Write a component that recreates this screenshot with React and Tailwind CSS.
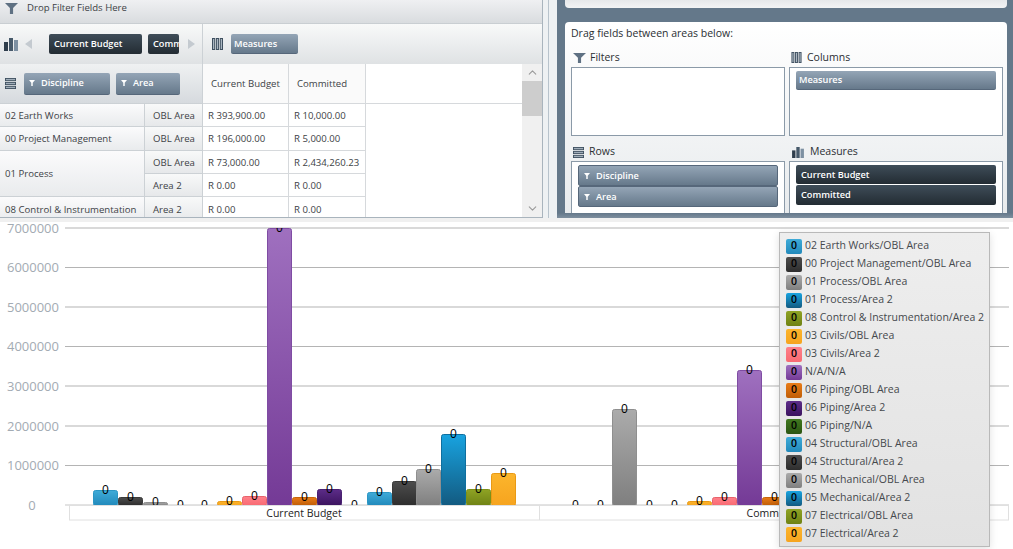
import React from "react";
import { ChevronUp, ChevronDown } from "lucide-react";

const Funnel = ({ className = "", color = "#5f7183" }) => (
  <svg viewBox="0 0 14 14" preserveAspectRatio="none" className={className}><path d="M0 0h14L8.7 6.5V14H5.3V6.5z" fill={color} /></svg>
);
const Bars = ({ className = "" }) => (
  <svg viewBox="0 0 14 13" className={className}>
    <rect x="0" y="4" width="4" height="9" fill="#2f3e4c" /><rect x="5" y="0" width="4" height="13" fill="#46596a" /><rect x="10" y="2" width="4" height="11" fill="#7d90a2" />
  </svg>
);
const Cols = ({ className = "" }) => (
  <svg viewBox="0 0 11 12" className={className} fill="#aab6c1" stroke="#3f5060" strokeWidth="1">
    <rect x=".5" y=".5" width="2.2" height="11" /><rect x="4.4" y=".5" width="2.2" height="11" /><rect x="8.3" y=".5" width="2.2" height="11" />
  </svg>
);
const RowsIcon = ({ className = "" }) => (
  <svg viewBox="0 0 12 12" className={className} fill="#9fadb9" stroke="#3f5060" strokeWidth="1">
    <rect x=".5" y=".5" width="11" height="2.4" /><rect x=".5" y="4.8" width="11" height="2.4" /><rect x=".5" y="9.1" width="11" height="2.4" />
  </svg>
);
const Tri = ({ dir }) => (
  <svg viewBox="0 0 7 10" className="w-[7px] h-[10px]"><path d={dir === "l" ? "M7 0v10L0 5z" : "M0 0v10l7-5z"} fill="#c4cad0" /></svg>
);

const DarkChip = ({ children, className = "" }) => (
  <div className={`flex items-center rounded-[2px] bg-gradient-to-b from-[#3f4d59] to-[#232c33] text-white font-semibold text-[9.2px] overflow-hidden whitespace-nowrap ${className}`}>{children}</div>
);
const SteelChip = ({ children, className = "", filter }) => (
  <div className={`flex items-center rounded-[2px] border-b border-[#56677a] bg-gradient-to-b from-[#94a5b6] to-[#66798b] text-white font-semibold text-[9.2px] whitespace-nowrap ${className}`}>
    {filter && <Funnel className="w-[6px] h-[6px] ml-[5px] mr-[6px]" color="#ffffff" />}{children}
  </div>
);

const leftCell = "flex items-center pl-[5px] pt-[2px] bg-gradient-to-b from-[#fbfbfc] to-[#e9ebed] border-b border-r border-[#ccd1d5]";
const midCell = "flex items-center pl-2 pt-[2px] bg-gradient-to-b from-[#f8f9f9] to-[#e6e8ea] border-b border-r border-[#ccd1d5]";
const valCell = "flex items-center pl-[5px] pt-[2px] bg-white border-b border-r border-[#d6d9dc]";

function Pivot() {
  return (
    <div className="w-[543px] shrink-0 flex flex-col border-r border-b border-[#a9b4bd] text-[#3d4246] text-[9.6px]">
      <div className="h-[24px] shrink-0 flex items-center pb-[6px] bg-gradient-to-b from-[#eff0f2] to-[#d9dcdf] border-b border-[#c9ced2]">
        <Funnel className="w-[13px] h-[11px] ml-[5px] mr-[9px]" />
        <span>Drop Filter Fields Here</span>
      </div>
      <div className="h-[40px] shrink-0 flex bg-gradient-to-b from-[#f8f9f9] to-[#dfe2e4]">
        <div className="w-[203px] shrink-0 flex items-center border-r border-[#ccd1d5]">
          <Bars className="w-[14px] h-[13px] ml-[4px]" />
          <div className="ml-[7px] mr-[17px] flex"><Tri dir="l" /></div>
          <DarkChip className="w-[93px] h-[20px] pl-[5px]">Current Budget</DarkChip>
          <DarkChip className="w-[31px] h-[20px] pl-[5px] ml-[6px]">Committed</DarkChip>
          <div className="ml-[9px] flex"><Tri dir="r" /></div>
        </div>
        <div className="flex items-center">
          <Cols className="w-[11px] h-[12px] ml-[9px] mr-[8px]" />
          <SteelChip className="w-[67px] h-[20px] pl-[3px]">Measures</SteelChip>
        </div>
      </div>
      <div className="flex-1 flex min-h-0">
        <div className="w-[522px] shrink-0 overflow-hidden">
          <div className="grid grid-cols-[145px_58px_86px_77px_156px] grid-rows-[40px_23px_24px_23px_23px_26px]">
            <div className="col-span-2 flex items-center bg-gradient-to-b from-[#eff1f2] to-[#d6dade] border-b border-r border-[#ccd1d5]">
              <RowsIcon className="w-[11px] h-[11px] ml-[5px] mr-[8px]" />
              <SteelChip filter className="w-[86px] h-[22px]">Discipline</SteelChip>
              <SteelChip filter className="w-[64px] h-[22px] ml-[6px]">Area</SteelChip>
            </div>
            <div className="flex items-center pl-[8px] pt-[2px] bg-[#fafafa] border-b border-r border-[#d6d9dc]">Current Budget</div>
            <div className="flex items-center pl-[8px] pt-[2px] bg-[#fafafa] border-b border-r border-[#d6d9dc]">Committed</div>
            <div className="bg-white border-b border-[#d6d9dc]" />

            <div className={leftCell}>02 Earth Works</div><div className={midCell}>OBL Area</div>
            <div className={valCell}>R 393,900.00</div><div className={valCell}>R 10,000.00</div><div />

            <div className={leftCell}>00 Project Management</div><div className={midCell}>OBL Area</div>
            <div className={valCell}>R 196,000.00</div><div className={valCell}>R 5,000.00</div><div />

            <div className={`${leftCell} row-span-2`}>01 Process</div><div className={midCell}>OBL Area</div>
            <div className={valCell}>R 73,000.00</div><div className={valCell}>R 2,434,260.23</div><div />

            <div className={midCell}>Area 2</div>
            <div className={valCell}>R 0.00</div><div className={valCell}>R 0.00</div><div />

            <div className={leftCell}>08 Control &amp; Instrumentation</div><div className={midCell}>Area 2</div>
            <div className={valCell}>R 0.00</div><div className={valCell}>R 0.00</div><div />
          </div>
        </div>
        <div className="w-[20px] shrink-0 flex flex-col bg-[#f0f0f0]">
          <div className="h-[17px] flex items-center justify-center text-[#9a9a9a]"><ChevronUp size={13} /></div>
          <div className="h-[35px] bg-[#cdcdcd]" />
          <div className="flex-1" />
          <div className="h-[17px] flex items-center justify-center text-[#9a9a9a]"><ChevronDown size={13} /></div>
        </div>
      </div>
    </div>
  );
}

const FieldBox = ({ children, className = "" }) => (
  <div className={`bg-white border border-[#8b9aa8] ${className}`}>{children}</div>
);

function Editor() {
  return (
    <div className="flex-1 flex min-w-0">
      <div className="w-[6px] shrink-0 bg-[#eef1f3] border-r border-[#b8c3cc]" />
      <div className="w-[8px] shrink-0 bg-[#eef1f3]" />
      <div className="flex-1 flex flex-col bg-[#64788a] pl-[8px] pr-[6px] overflow-hidden text-[#2b2f33] text-[10.5px]">
        <div className="h-[8px] shrink-0 rounded-b-[4px] bg-gradient-to-b from-[#e6e8ea] to-[#f3f4f5]" />
        <div className="h-[14px] shrink-0" />
        <div className="h-[191px] shrink-0 rounded-t-[4px] bg-gradient-to-b from-[#ffffff] to-[#e8ebed] px-[6px] overflow-hidden">
          <div className="h-[24px] flex items-center">Drag fields between areas below:</div>
          <div className="grid grid-cols-[214px_214px] gap-x-[4px]">
            <div className="h-[21px] pt-[2px] flex items-center pl-[2px]"><Funnel className="w-[13px] h-[10px] mr-[4px]" />Filters</div>
            <div className="h-[21px] pt-[2px] flex items-center pl-[2px]"><Cols className="w-[11px] h-[11px] mr-[5px]" />Columns</div>
            <FieldBox className="h-[69px]" />
            <FieldBox className="h-[69px] pt-[3px] px-[6px]"><SteelChip className="h-[19px] pl-[3px]">Measures</SteelChip></FieldBox>
            <div className="h-[25px] pt-[7px] flex items-center pl-[2px]"><RowsIcon className="w-[11px] h-[11px] mr-[5px]" />Rows</div>
            <div className="h-[25px] pt-[7px] flex items-center pl-[2px]"><Bars className="w-[14px] h-[11px] mr-[5px]" />Measures</div>
            <FieldBox className="h-[60px] pt-[3px] px-[6px]">
              <SteelChip filter className="h-[21px] border border-[#56677a]">Discipline</SteelChip>
              <SteelChip filter className="h-[21px] border border-[#56677a]">Area</SteelChip>
            </FieldBox>
            <FieldBox className="h-[60px] pt-[3px] px-[6px]">
              <DarkChip className="h-[19px] pl-[5px] mb-[1px]">Current Budget</DarkChip>
              <DarkChip className="h-[20px] pl-[5px]">Committed</DarkChip>
            </FieldBox>
          </div>
        </div>
        <div className="flex-1 bg-gradient-to-b from-[#64788a] to-[#7e8f9f] -mx-[8px]" />
      </div>
    </div>
  );
}

const P = {
  blue: ["#3fabd8", "#2189bb", "#2b96c4"],
  dark: ["#4d4d4d", "#2d2d2d", "#3a3a3a"],
  gray: ["#ababab", "#7f7f7f", "#8f8f8f"],
  deep: ["#18a3e0", "#135a80", "#0f6f9f"],
  olive: ["#8fa324", "#6f8214", "#7d9018"],
  yellow: ["#fcb52c", "#f6a41f", "#e99a15"],
  pink: ["#ff808a", "#f86a72", "#e8636b"],
  purple: ["#9f70bf", "#743a96", "#7f4ca3"],
  orange: ["#e97c17", "#bf5d07", "#c96608"],
  dpurple: ["#5c2c88", "#3b135e", "#4a2172"],
  green: ["#40781f", "#2b5512", "#356618"],
};
const bars = [
  [93, 490, "blue"], [118, 497, "dark"], [143, 502, "gray"], [168, 505, "deep"], [192, 505, "olive"], [217, 501, "yellow"], [242, 496, "pink"],
  [267, 228, "purple"], [292, 497, "orange"], [317, 489, "dpurple"], [342, 505, "green"],
  [367, 492, "blue"], [392, 481, "dark"], [416, 469, "gray"], [441, 434, "deep"], [466, 489, "olive"], [491, 473, "yellow"],
  [563, 505, "blue"], [588, 505, "dark"], [612, 409, "gray"], [637, 505, "deep"], [662, 505, "olive"], [687, 501, "yellow"], [712, 497, "pink"],
  [737, 370, "purple"], [762, 497, "orange"],
];
const gridY = [228, 267.5, 307, 346.5, 386, 426, 465.5];
const ticks = ["7000000", "6000000", "5000000", "4000000", "3000000", "2000000", "1000000"];

function ChartSvg() {
  const sans = { fontFamily: '"Open Sans", sans-serif' };
  return (
    <svg viewBox="0 218 1013 331" className="absolute left-0 top-0 w-[1013px] h-[331px]">
      <defs>
        {Object.entries(P).map(([k, c]) => (
          <linearGradient key={k} id={`g-${k}`} x1="0" y1="0" x2="0" y2="1">
            <stop offset="0" stopColor={c[0]} /><stop offset="1" stopColor={c[1]} />
          </linearGradient>
        ))}
        <clipPath id="plot"><rect x="0" y="228" width="1013" height="277" /></clipPath>
      </defs>
      <rect x="0" y="218" width="1013" height="4" fill="#f0f0f0" />
      {gridY.map((y) => <line key={y} x1="65" x2="1009" y1={y} y2={y} stroke="#b4b4b4" strokeWidth="1.2" />)}
      <line x1="65" x2="1009" y1="505" y2="505" stroke="#c8c8c8" strokeWidth="1.2" />
      {ticks.map((t, i) => (
        <text key={t} x="59" y={gridY[i] + 4.5} textAnchor="end" fontSize="13" fill="#a3abb3" style={sans}>{t}</text>
      ))}
      <text x="32" y="510" textAnchor="middle" fontSize="13" fill="#a3abb3" style={sans}>0</text>
      <rect x="69.5" y="505.5" width="939" height="14.5" fill="#ffffff" stroke="#e0e0e0" />
      <line x1="539.5" x2="539.5" y1="505" y2="520" stroke="#e0e0e0" />
      <g clipPath="url(#plot)">
        {bars.map(([x, y, k], i) => (
          <g key={i}>
            {y < 505 && <rect x={x + 0.5} y={y + 0.5} width="24" height={505 - y} rx="2" fill={`url(#g-${k})`} stroke={P[k][2]} />}
            <text x={x + 12.5} y={y + 4} textAnchor="middle" fontSize="12" fill="#000" style={sans}>0</text>
          </g>
        ))}
      </g>
      <text x="304" y="516.5" textAnchor="middle" fontSize="10.5" fill="#222" style={sans}>Current Budget</text>
      <text x="774" y="516.5" textAnchor="middle" fontSize="10.5" fill="#222" style={sans}>Committed</text>
    </svg>
  );
}

const legend = [
  ["02 Earth Works/OBL Area", "blue"], ["00 Project Management/OBL Area", "dark"], ["01 Process/OBL Area", "gray"], ["01 Process/Area 2", "deep"],
  ["08 Control & Instrumentation/Area 2", "olive"], ["03 Civils/OBL Area", "yellow"], ["03 Civils/Area 2", "pink"], ["N/A/N/A", "purple"],
  ["06 Piping/OBL Area", "orange"], ["06 Piping/Area 2", "dpurple"], ["06 Piping/N/A", "green"], ["04 Structural/OBL Area", "blue"],
  ["04 Structural/Area 2", "dark"], ["05 Mechanical/OBL Area", "gray"], ["05 Mechanical/Area 2", "deep"], ["07 Electrical/OBL Area", "olive"],
  ["07 Electrical/Area 2", "yellow"],
];

function Legend() {
  return (
    <div className="absolute left-[779px] top-[14px] w-[211px] h-[315px] pt-[4px] pl-[6px] bg-gradient-to-b from-[#eeeeee] to-[#e2e2e2] border border-[#b9b9b9] shadow-[0_2px_8px_rgba(0,0,0,0.12)] text-[#45494d] text-[10.5px]">
      {legend.map(([t, k]) => (
        <div key={t} className="h-[18px] flex items-center whitespace-nowrap">
          <div className="w-[16px] h-[15px] mr-[3px] flex items-center justify-center rounded-[2px] text-black text-[10.5px] font-semibold" style={{ background: `linear-gradient(${P[k][0]}, ${P[k][1]})` }}>0</div>
          {t}
        </div>
      ))}
    </div>
  );
}

export default function App() {
  return (
    <div className="w-[1013px] h-[549px] flex flex-col overflow-hidden bg-white font-['Open_Sans',sans-serif]">
      <div className="h-[218px] shrink-0 flex">
        <Pivot />
        <Editor />
      </div>
      <div className="relative flex-1">
        <ChartSvg />
        <Legend />
      </div>
    </div>
  );
}
